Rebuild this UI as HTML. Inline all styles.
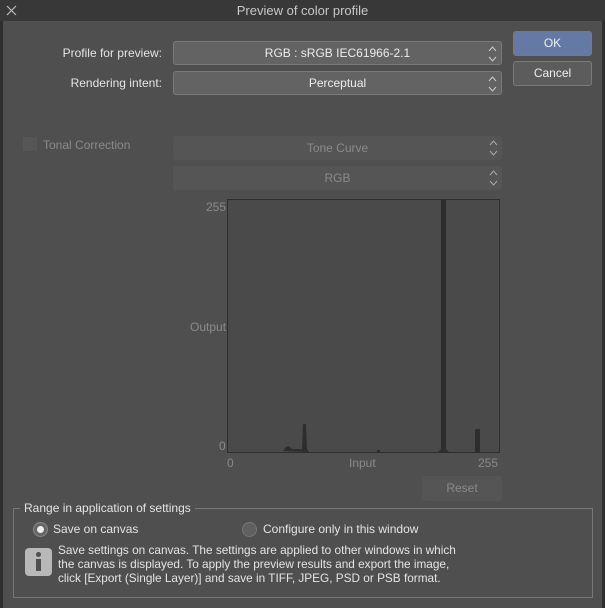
<!DOCTYPE html>
<html><head><style>
*{margin:0;padding:0;box-sizing:border-box}
body{width:605px;height:608px;background:#2f2f2f;font-family:"Liberation Sans",sans-serif;font-size:12px;color:#e4e4e4;position:relative;overflow:hidden}
.a{position:absolute}
.title{left:0;top:0;width:605px;height:21px;background:#383838;text-align:center;line-height:21px;font-size:13px;color:#c8c8c8}
.main{left:3px;top:21px;width:599px;height:587px;background:#4f4f4f}
.combo{background:#636363;border:1px solid #7a7a7a;border-radius:3px;text-align:center;line-height:23px;color:#ececec}
.dis{background:#555;border:none;color:#8a8a8a;line-height:25px}
.arr{position:absolute;right:4px;top:3px;width:9px;height:18px}
.lbl{text-align:right;width:160px;color:#e4e4e4}
.btn{border:1px solid #7a7a7a;border-radius:3px;text-align:center;line-height:23px;color:#eee;font-size:12px}
.g{color:#8a8a8a}
</style></head><body>
<div class="a title">Preview of color profile</div>
<svg class="a" style="left:6px;top:5px" width="11" height="11"><path d="M1 1L10 10M10 1L1 10" stroke="#bbb" stroke-width="1.2"/></svg>
<div class="a main"></div>
<div class="a lbl" style="left:2px;top:46px">Profile for preview:</div>
<div class="a lbl" style="left:2px;top:76px">Rendering intent:</div>
<div class="a combo" style="left:173px;top:41px;width:329px;height:24px">RGB : sRGB IEC61966-2.1<svg class="arr"><path d="M1 6L4.5 2L8 6M1 12L4.5 16L8 12" stroke="#ccc" fill="none"/></svg></div>
<div class="a combo" style="left:173px;top:71px;width:329px;height:24px">Perceptual<svg class="arr"><path d="M1 6L4.5 2L8 6M1 12L4.5 16L8 12" stroke="#ccc" fill="none"/></svg></div>
<div class="a btn" style="left:513px;top:31px;width:79px;height:25px;background:#6479a3">OK</div>
<div class="a btn" style="left:513px;top:61px;width:79px;height:25px;background:#5c5c5c">Cancel</div>
<div class="a" style="left:23px;top:137px;width:14px;height:14px;background:#565656;border-radius:2px"></div>
<div class="a g" style="left:43px;top:138px">Tonal Correction</div>
<div class="a combo dis" style="left:173px;top:136px;width:329px;height:24px">Tone Curve<svg class="arr"><path d="M1 6L4.5 2L8 6M1 12L4.5 16L8 12" stroke="#aaa" fill="none"/></svg></div>
<div class="a combo dis" style="left:173px;top:166px;width:329px;height:24px">RGB<svg class="arr"><path d="M1 6L4.5 2L8 6M1 12L4.5 16L8 12" stroke="#aaa" fill="none"/></svg></div>
<div class="a" style="left:227px;top:199px;width:273px;height:254px;background:#4a4a4a;border:1px solid #2e2e2e"></div>
<svg class="a" style="left:227px;top:199px" width="273" height="254">
<path d="M56 252L59 248L62 247L65 250L75 250L76 225L79 225L80 250L82 253Z" fill="#2e2e2e"/>
<rect x="214" y="1" width="5" height="252" fill="#2e2e2e"/>
<path d="M211 253L214 250L219 250L222 253Z" fill="#2e2e2e"/>
<rect x="248" y="230" width="5" height="23" fill="#2e2e2e"/>
<rect x="150" y="251" width="3" height="2" fill="#2e2e2e"/>
</svg>
<div class="a g" style="left:206px;top:200px">255</div>
<div class="a g" style="left:190px;top:320px">Output</div>
<div class="a g" style="left:219px;top:439px">0</div>
<div class="a g" style="left:227px;top:456px">0</div>
<div class="a g" style="left:349px;top:456px">Input</div>
<div class="a g" style="left:478px;top:456px">255</div>
<div class="a" style="left:422px;top:476px;width:80px;height:25px;background:#555;border-radius:3px;text-align:center;line-height:25px;color:#8a8a8a">Reset</div>
<div class="a" style="left:13px;top:508px;width:580px;height:90px;border:1px solid #777"></div>
<div class="a" style="left:20px;top:501px;background:#4f4f4f;padding:0 4px">Range in application of settings</div>
<div class="a" style="left:33px;top:522px;width:15px;height:15px;border-radius:50%;background:#666;border:1px solid #888"></div>
<div class="a" style="left:37px;top:526px;width:7px;height:7px;border-radius:50%;background:#eee"></div>
<div class="a" style="left:53px;top:522px">Save on canvas</div>
<div class="a" style="left:242px;top:522px;width:15px;height:15px;border-radius:50%;background:#606060;border:1px solid #777"></div>
<div class="a" style="left:263px;top:522px">Configure only in this window</div>
<div class="a" style="left:25px;top:548px;width:27px;height:28px;background:#b8b8b8;border-radius:4px"></div>
<div class="a" style="left:36px;top:552px;width:5px;height:5px;background:#4f4f4f;border-radius:50%"></div>
<div class="a" style="left:36px;top:559px;width:5px;height:12px;background:#4f4f4f"></div>
<div class="a" style="left:58px;top:543px;line-height:14px;font-size:11.8px">Save settings on canvas. The settings are applied to other windows in which<br>the canvas is displayed. To apply the preview results and export the image,<br>click [Export (Single Layer)] and save in TIFF, JPEG, PSD or PSB format.</div>
</body></html>
